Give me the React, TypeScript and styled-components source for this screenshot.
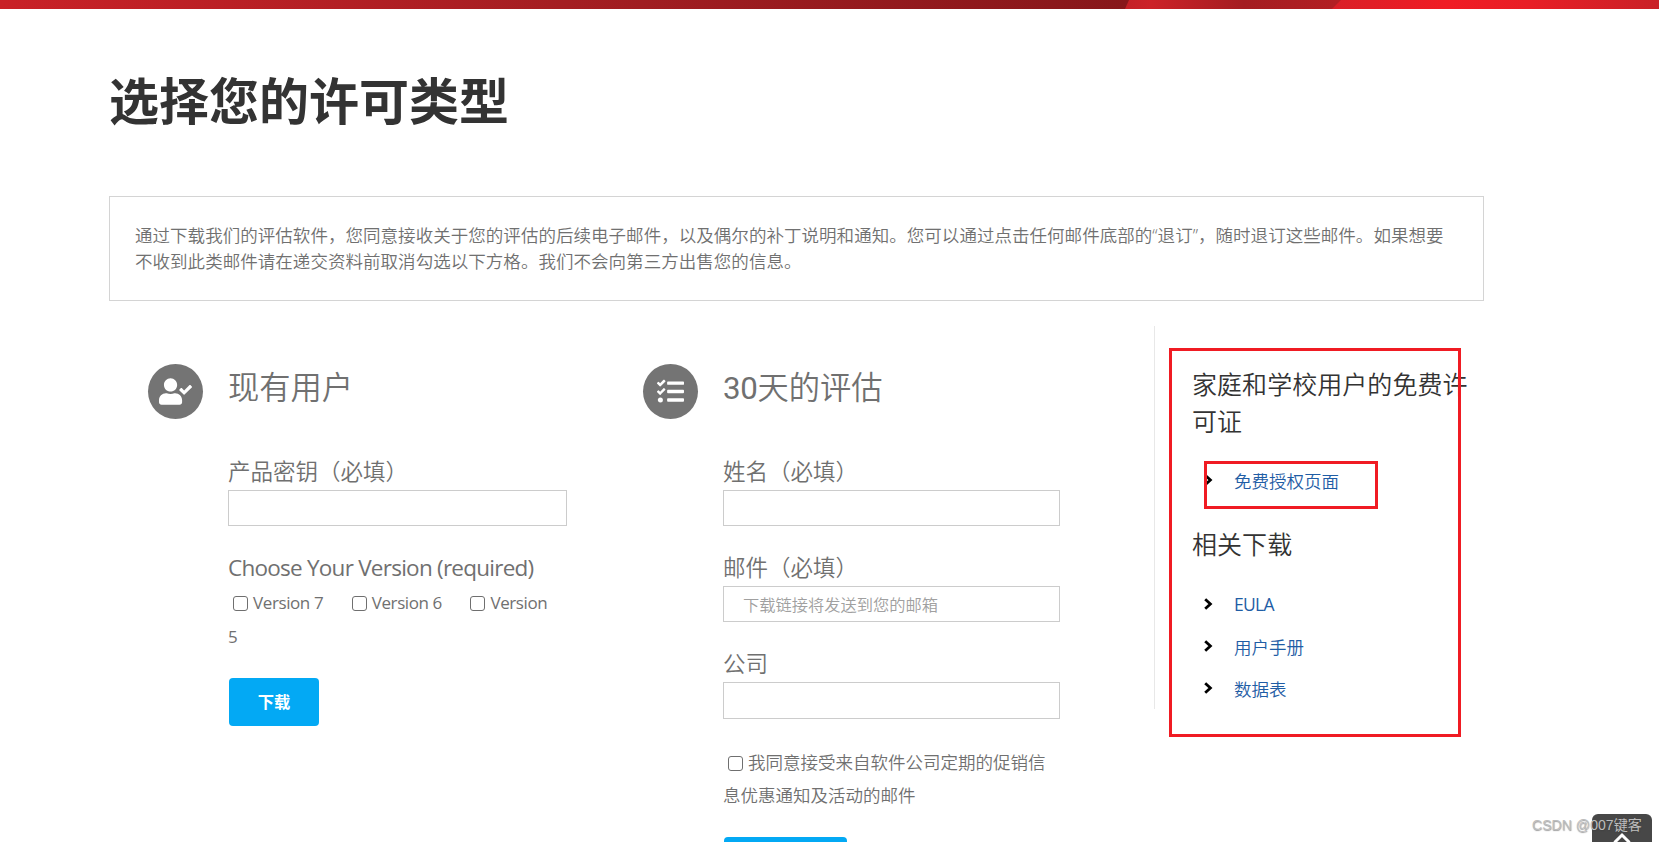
import React from "react";
import styled, { createGlobalStyle } from "styled-components";
import { FaUserCheck, FaTasks } from "react-icons/fa";

const GlobalStyle = createGlobalStyle`
  * { box-sizing: border-box; }
  html, body { margin: 0; padding: 0; background: #fff; overflow: hidden; }
  body {
    font-family: "Open Sans", "Noto Sans CJK SC", sans-serif;
    font-weight: 350;
    font-size: 17.5px;
    color: #707070;
  }
  h1, h2, h3, p, ul { margin: 0; padding: 0; font-weight: inherit; }
`;

const Page = styled.div`
  position: relative;
  width: 1659px;
  height: 842px;
  overflow: hidden;
  background: #fff;
`;

const Banner = styled.svg`
  display: block;
  width: 100%;
  height: 9px;
`;

const Container = styled.main`
  width: 1375px;
  margin-left: 109px;
`;

const Title = styled.h1`
  padding-top: 62px;
  height: 187px;
  font-size: 50px;
  line-height: 60px;
  font-weight: 700;
  color: #333;
`;

const Notice = styled.p`
  height: 105px;
  padding: 25px 25px;
  border: 1px solid #d4d4d4;
  line-height: 26px;
  letter-spacing: 0.04px;
  white-space: nowrap;
`;

const Columns = styled.div`
  display: flex;
  padding-top: 25px;
`;

const Column = styled.section<{ $width: number; $gap: number }>`
  display: grid;
  flex: none;
  grid-template-columns: 55px 1fr;
  column-gap: 25px;
  align-content: start;
  width: ${(p) => p.$width}px;
  margin-left: ${(p) => p.$gap}px;
  padding-top: 38px;
`;

const RoundIcon = styled.div`
  display: flex;
  align-items: center;
  justify-content: center;
  width: 55px;
  height: 55px;
  border-radius: 50%;
  background: #747474;
  color: #fff;
`;

const Form = styled.div`
  min-width: 0;
`;

const FormTitle = styled.h2`
  height: 90px;
  padding-top: 1px;
  font-family: Roboto, "Noto Sans CJK SC", sans-serif;
  font-size: 31.25px;
  line-height: 47px;
`;

const Digits = styled.span`
  font-weight: 400;
  letter-spacing: -0.3px;
`;

const Field = styled.label`
  display: block;
  height: 96px;
`;

const FieldName = styled.span<{ $latin?: boolean }>`
  display: block;
  height: 36px;
  font-size: 22.5px;
  line-height: 36px;
  white-space: nowrap;
  font-weight: ${(p) => (p.$latin ? 400 : 350)};
  letter-spacing: ${(p) => (p.$latin ? -0.75 : 0)}px;
`;

const TextInput = styled.input<{ $height?: number }>`
  display: block;
  width: 100%;
  height: ${(p) => p.$height ?? 36}px;
  padding: 2px 19px 0;
  border: 1px solid #ccc;
  border-radius: 0;
  background: #fff;
  font: inherit;
  font-size: 16.25px;
  outline: none;
  &::placeholder { color: #a0a0a0; opacity: 1; }
`;

const Choices = styled.div<{ $line: number; $top: number; $bottom: number; $latin?: boolean }>`
  padding: ${(p) => p.$top}px 0 ${(p) => p.$bottom}px;
  line-height: ${(p) => p.$line}px;
  font-size: ${(p) => (p.$latin ? 17 : 17.5)}px;
  font-weight: ${(p) => (p.$latin ? 400 : 350)};
  letter-spacing: ${(p) => (p.$latin ? -0.4 : 0)}px;
`;

const Choice = styled.label`
  margin-right: 23.5px;
`;

const Check = styled.input`
  appearance: none;
  width: 15px;
  height: 15px;
  margin: 0 5px;
  border: 1px solid #6f6f6f;
  border-radius: 3px;
  background: #fff;
  vertical-align: -2px;
`;

const Button = styled.button<{ $width: number }>`
  display: block;
  width: ${(p) => p.$width}px;
  height: 48px;
  margin: 0 0 0 1px;
  padding: 0 0 2px;
  border: 0;
  border-radius: 4px;
  background: #03a9f4;
  color: #fff;
  font: inherit;
  font-size: 16.25px;
  font-weight: 700;
`;

const Sidebar = styled.aside`
  flex: none;
  width: 330px;
  height: 383px;
  margin-left: 94px;
  padding: 40px 0 0 37px;
  border-left: 1px solid #e8e8e8;
`;

const SideTitle = styled.h3`
  width: 280px;
  font-size: 25px;
  line-height: 37px;
  letter-spacing: 0.05px;
  color: #333;
`;

const LinkList = styled.ul<{ $top: number; $bottom: number }>`
  padding: ${(p) => p.$top}px 0 ${(p) => p.$bottom}px 12px;
  list-style: none;
`;

const LinkItem = styled.li`
  display: flex;
  align-items: center;
  height: 42px;
`;

const Chevron = styled.svg`
  width: 9px;
  height: 12px;
  margin: 0 21px 1px 0;
  fill: none;
  stroke: #000;
  stroke-width: 2.8;
`;

const Anchor = styled.a<{ $latin?: boolean }>`
  color: #1f5da5;
  text-decoration: none;
  font-weight: ${(p) => (p.$latin ? 400 : 350)};
  letter-spacing: ${(p) => (p.$latin ? -0.7 : 0)}px;
`;

const Highlight = styled.div<{ $x: number; $y: number; $w: number; $h: number }>`
  position: absolute;
  left: ${(p) => p.$x}px;
  top: ${(p) => p.$y}px;
  width: ${(p) => p.$w}px;
  height: ${(p) => p.$h}px;
  border: 3px solid #f01b23;
`;

const BackToTop = styled.div`
  position: absolute;
  left: 1592px;
  top: 814px;
  width: 60px;
  height: 40px;
  border-radius: 6px 6px 0 0;
  background: #474747;
  svg { display: block; margin: 18px auto 0; }
`;

const Watermark = styled.div`
  position: absolute;
  left: 1532px;
  top: 813px;
  font-family: "Liberation Sans", "Noto Sans CJK SC", sans-serif;
  font-size: 14.1px;
  font-weight: 400;
  line-height: 24px;
  white-space: nowrap;
  color: #bdbdbd;
  text-shadow: 0.5px 0.5px 1px rgba(60, 60, 60, 0.5);
`;

const Link = ({ children, latin }: { children: React.ReactNode; latin?: boolean }) => (
  <LinkItem>
    <Chevron viewBox="0 0 9 12">
      <path d="M1.2 1.2L6.4 6L1.2 10.8" />
    </Chevron>
    <Anchor $latin={latin}>{children}</Anchor>
  </LinkItem>
);

export default function App() {
  return (
    <Page>
      <GlobalStyle />
      <Banner viewBox="0 0 1659 9" preserveAspectRatio="none">
        <defs>
          <linearGradient id="base">
            <stop offset="0" stopColor="#c92127" />
            <stop offset="0.5" stopColor="#a41e22" />
            <stop offset="1" stopColor="#87171a" />
          </linearGradient>
          <linearGradient id="middle">
            <stop offset="0" stopColor="#c32026" />
            <stop offset="0.12" stopColor="#cc2228" />
            <stop offset="0.55" stopColor="#a41d21" />
            <stop offset="1" stopColor="#b31f23" />
          </linearGradient>
          <linearGradient id="bright">
            <stop offset="0" stopColor="#d91f27" />
            <stop offset="0.35" stopColor="#f01c24" />
            <stop offset="0.6" stopColor="#e81e26" />
            <stop offset="1" stopColor="#c92127" />
          </linearGradient>
        </defs>
        <rect width="1131" height="9" fill="url(#base)" />
        <path d="M1129 0H1341V9H1125z" fill="url(#middle)" />
        <path d="M1341 0H1659V9H1332z" fill="url(#bright)" />
      </Banner>

      <Container>
        <Title>选择您的许可类型</Title>
        <Notice>
          通过下载我们的评估软件，您同意接收关于您的评估的后续电子邮件，以及偶尔的补丁说明和通知。您可以通过点击任何邮件底部的“退订”，随时退订这些邮件。如果想要
          <br />
          不收到此类邮件请在递交资料前取消勾选以下方格。我们不会向第三方出售您的信息。
        </Notice>

        <Columns>
          <Column $width={419} $gap={39}>
            <RoundIcon><FaUserCheck size={33} /></RoundIcon>
            <Form>
              <FormTitle>现有用户</FormTitle>
              <Field>
                <FieldName>产品密钥（必填）</FieldName>
                <TextInput />
              </Field>
              <FieldName $latin>Choose Your Version (required)</FieldName>
              <Choices $line={34} $top={0} $bottom={24} $latin>
                <Choice><Check type="checkbox" />Version 7</Choice>
                <Choice><Check type="checkbox" />Version 6</Choice>
                <Choice><Check type="checkbox" />Version <span>5</span></Choice>
              </Choices>
              <Button $width={90}>下载</Button>
            </Form>
          </Column>

          <Column $width={417} $gap={76}>
            <RoundIcon><FaTasks size={27} /></RoundIcon>
            <Form>
              <FormTitle><Digits>30</Digits>天的评估</FormTitle>
              <Field>
                <FieldName>姓名（必填）</FieldName>
                <TextInput />
              </Field>
              <Field>
                <FieldName>邮件（必填）</FieldName>
                <TextInput placeholder="下载链接将发送到您的邮箱" />
              </Field>
              <Field>
                <FieldName>公司</FieldName>
                <TextInput $height={37} />
              </Field>
              <Choices $line={33} $top={4} $bottom={25}>
                <Check type="checkbox" />我同意接受来自软件公司定期的促销信息优惠通知及活动的邮件
              </Choices>
              <Button $width={123} />
            </Form>
          </Column>

          <Sidebar>
            <SideTitle>家庭和学校用户的免费许可证</SideTitle>
            <LinkList $top={19} $bottom={25}>
              <Link>免费授权页面</Link>
            </LinkList>
            <SideTitle>相关下载</SideTitle>
            <LinkList $top={20} $bottom={0}>
              <Link latin>EULA</Link>
              <Link>用户手册</Link>
              <Link>数据表</Link>
            </LinkList>
          </Sidebar>
        </Columns>
      </Container>

      <Highlight $x={1169} $y={348} $w={292} $h={389} />
      <Highlight $x={1204} $y={461} $w={174} $h={48} />
      <BackToTop>
        <svg width="18" height="12" viewBox="0 0 18 12" fill="none" stroke="#fff" strokeWidth="3">
          <path d="M1.5 10.5L9 3L16.5 10.5" />
        </svg>
      </BackToTop>
      <Watermark>CSDN @007键客</Watermark>
    </Page>
  );
}
